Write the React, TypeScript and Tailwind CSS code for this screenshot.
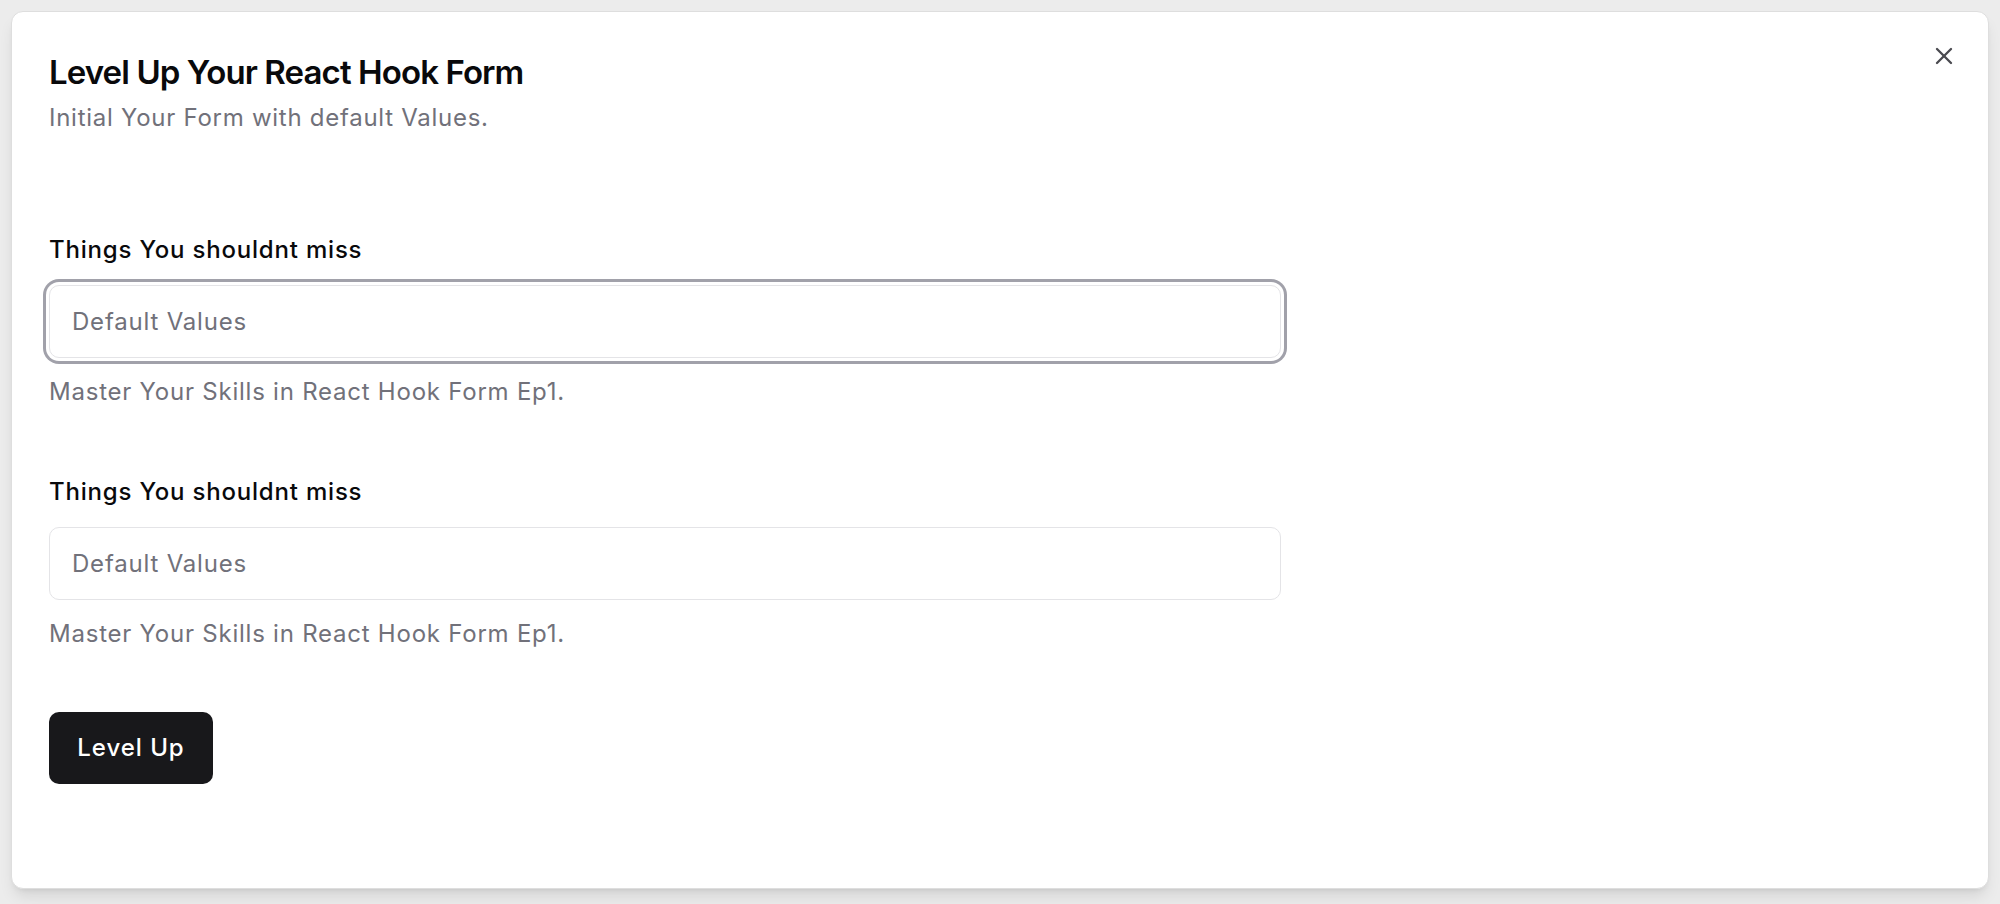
import React from "react";
import { X } from "lucide-react";

interface FieldProps {
  label: string;
  placeholder: string;
  help: string;
  focused?: boolean;
}

const Field: React.FC<FieldProps> = ({ label, placeholder, help, focused }) => {
  return (
    <div className="flex flex-col">
      <label className="text-[24px] leading-[32px] font-medium tracking-[0.8px] text-[#09090b]">
        {label}
      </label>
      <input
        readOnly
        placeholder={placeholder}
        className={
          "mt-[19px] h-[73px] w-[1232px] rounded-[10px] border border-[#e4e4e7] bg-white px-[22px] text-[24px] tracking-[0.8px] text-[#09090b] outline-none placeholder:text-[#71717a] " +
          (focused
            ? "ring-[3px] ring-[#a1a1aa] ring-offset-[3px] ring-offset-white"
            : "")
        }
      />
      <p className="mt-[18px] text-[24px] leading-[32px] tracking-[0.77px] text-[#71717a]">
        {help}
      </p>
    </div>
  );
};

export default function App() {
  return (
    <div
      className="h-[904px] w-[2000px] bg-[#ececec] pl-[11px] pt-[11px]"
      style={{ fontFamily: "Inter, 'Noto Sans', sans-serif" }}
    >
      <div className="relative flex h-[878px] w-[1978px] flex-col rounded-[12px] border border-[#dedede] bg-white pl-[37px] pt-[40px] shadow-lg">
        <button className="absolute right-[30px] top-[30px] text-[#4a4a50]">
          <X size={28} strokeWidth={2} />
        </button>

        <h2 className="text-[33px] leading-[40px] font-semibold tracking-[-0.9px] text-[#09090b]">
          Level Up Your React Hook Form
        </h2>
        <p className="mt-[10px] text-[24px] leading-[32px] tracking-[0.73px] text-[#71717a]">
          Initial Your Form with default Values.
        </p>

        <form className="mt-[100px] flex flex-col gap-[68px]">
          <Field
            label="Things You shouldnt miss"
            placeholder="Default Values"
            help="Master Your Skills in React Hook Form Ep1."
            focused
          />
          <Field
            label="Things You shouldnt miss"
            placeholder="Default Values"
            help="Master Your Skills in React Hook Form Ep1."
          />
        </form>

        <div className="mt-[62px]">
          <button
            type="button"
            className="h-[72px] w-[164px] rounded-[10px] bg-[#18181b] text-[24px] font-medium tracking-[0.95px] text-white"
          >
            Level Up
          </button>
        </div>
      </div>
    </div>
  );
}
